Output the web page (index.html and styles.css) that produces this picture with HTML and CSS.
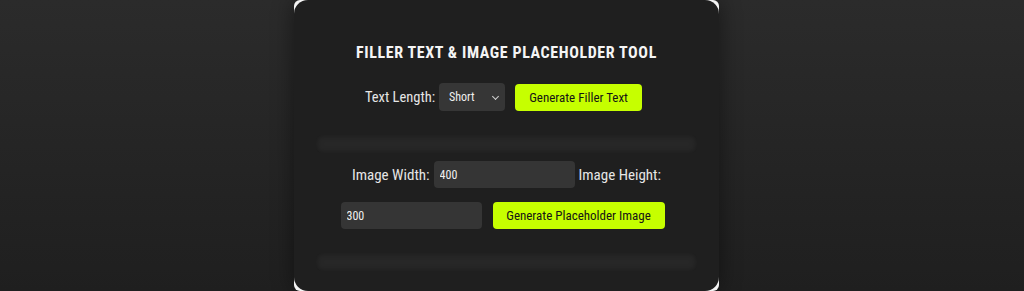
FILE: index.html
```html
<!DOCTYPE html>
<html>
  <head>
    <title>Filler Text &amp; Image Placeholder Tool</title>
    <link rel="stylesheet" href="styles.css">
  </head>
  <body>
    <div class="frame">
      <div class="container">
        <h1>Filler Text &amp; Image Placeholder Tool</h1>
        <div class="row">
          <label for="textLength">Text Length:</label>
          <span class="select-wrap">
            <select id="textLength" class="picker">
              <option>Short</option>
              <option>Medium</option>
              <option>Long</option>
            </select>
          </span>
          <button class="action">Generate Filler Text</button>
        </div>
        <div class="output" id="fillerOutput"></div>
        <div class="row wrap">
          <label for="imgWidth">Image Width:</label>
          <input id="imgWidth" class="field" type="text" value="400" />
          <label for="imgHeight">Image Height:</label>
          <input id="imgHeight" class="field" type="text" value="300" />
          <button class="action wide">Generate Placeholder Image</button>
        </div>
        <div class="output" id="imageOutput"></div>
      </div>
    </div>
  </body>
</html>
```

FILE: styles.css
```css
html,
body {
  margin: 0;
  height: 291px;
  overflow: hidden;
}

body {
  box-sizing: border-box;
  padding-right: 11px;
  background: linear-gradient(#2b2b2b, #1f1f1f);
  display: flex;
  justify-content: center;
  font-family: "Roboto Condensed", Roboto, "Liberation Sans", sans-serif;
  font-stretch: condensed;
}

.frame {
  width: 425px;
  height: 291px;
  background: #f4f4f4;
  border-radius: 6px;
  box-shadow: 0 0 22px rgba(0, 0, 0, 0.45);
}

.container {
  box-sizing: border-box;
  width: 425px;
  height: 291px;
  padding: 43px 22px 0 22px;
  background: #1f1f1f;
  border-radius: 14px;
}

h1 {
  margin: 0 0 21px 0;
  font-family: Roboto, sans-serif;
  font-stretch: condensed;
  font-weight: 700;
  font-size: 16px;
  line-height: 19px;
  letter-spacing: 0.6px;
  text-transform: uppercase;
  text-align: center;
  color: #f5f5f5;
}

.row {
  display: flex;
  justify-content: center;
  align-items: center;
  column-gap: 4px;
}

.wrap {
  flex-wrap: wrap;
  row-gap: 14px;
  margin-top: 8px;
}

label {
  font-size: 15px;
  color: #e6e6e6;
}

.row:first-of-type label {
  font-size: 14.5px;
}

.select-wrap {
  position: relative;
  display: inline-block;
  height: 28px;
}

.select-wrap::after {
  content: "";
  position: absolute;
  right: 7px;
  top: 11px;
  width: 4px;
  height: 4px;
  border-right: 1.5px solid #d0d0d0;
  border-bottom: 1.5px solid #d0d0d0;
  transform: rotate(45deg);
  pointer-events: none;
}

.picker {
  appearance: none;
  width: 66px;
  height: 28px;
  padding: 0 4px 0 10px;
  background: #363636;
  color: #f0f0f0;
  border: none;
  border-radius: 4px;
  font-family: inherit;
  font-size: 12px;
}

.field {
  box-sizing: border-box;
  width: 141px;
  height: 27px;
  padding: 0 6px;
  background: #353535;
  color: #f0f0f0;
  border: none;
  border-radius: 4px;
  font-family: inherit;
  font-size: 12px;
}

.action {
  height: 27px;
  width: 127px;
  margin: 0 6px 0 6px;
  background: #c6ff00;
  color: #151515;
  border: none;
  border-radius: 4px;
  font-family: inherit;
  font-size: 13px;
}

.wide {
  width: 172px;
  margin: 0 8px 0 7px;
}

.output {
  height: 18px;
  margin: 24px 0 0 0;
  background: #272727;
  border-radius: 6px;
  box-shadow: inset 0 0 6px rgba(0, 0, 0, 0.35);
}
```
